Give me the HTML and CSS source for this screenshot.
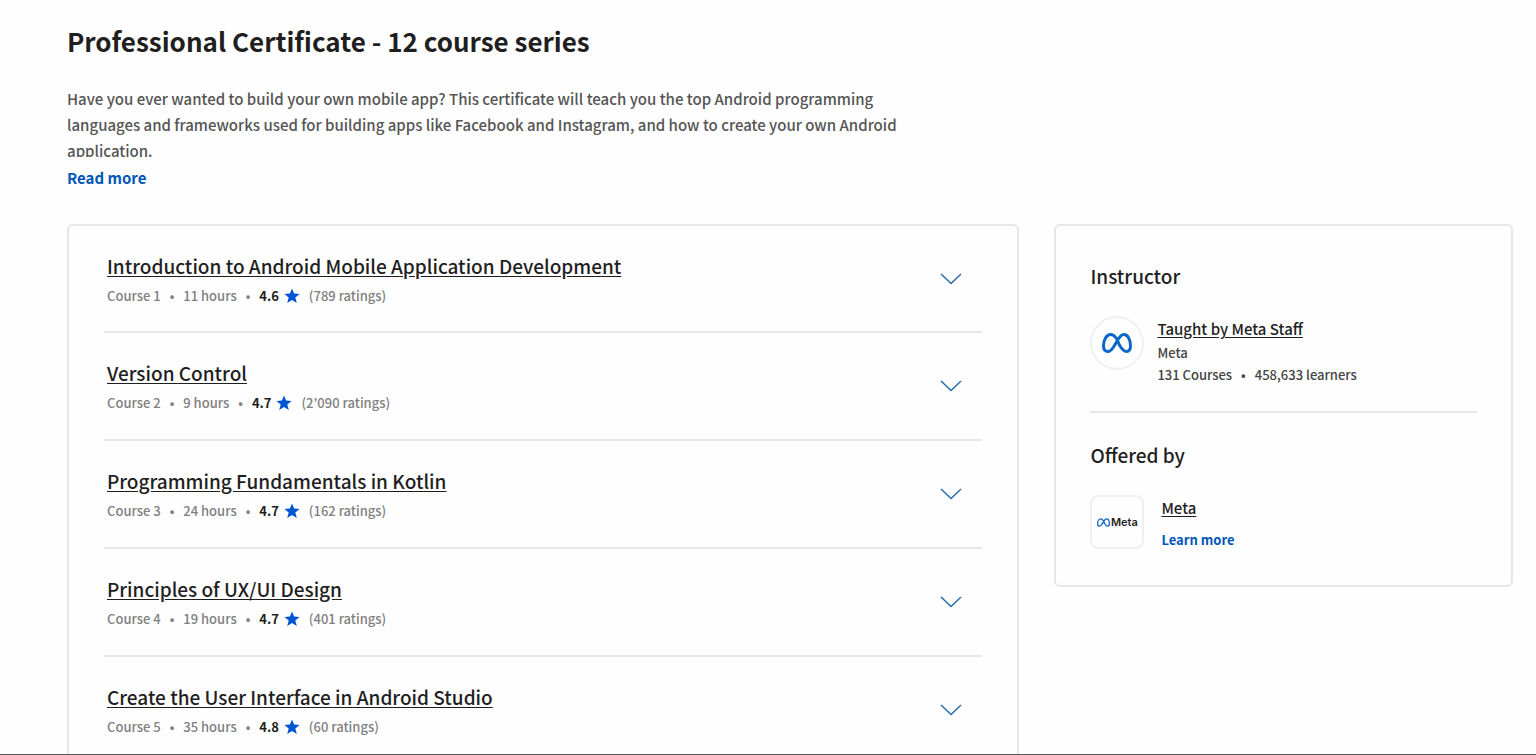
FILE: index.html
```html
<!DOCTYPE html>
<html lang="en">
<head>
    <meta charset="UTF-8">
    <meta name="viewport" content="width=device-width, initial-scale=1.0">
    <title>Professional Certificate - 12 course series</title>
    <link rel="stylesheet" href="styles.css">
</head>
<body>
    <!-- Shared icons -->
    <svg class="sprite" aria-hidden="true">
        <symbol id="star" viewBox="0 0 16 16">
            <path d="M8 0.400l2.100 5.200 5.500 0.300-4.300 3.600 1.500 5.600L8 12l-4.800 3.100 1.500-5.600L0.400 5.900l5.500-0.300z"/>
        </symbol>
        <symbol id="chevron" viewBox="0 0 22 12">
            <path d="M1 1l10 9.500L21 1"/>
        </symbol>
        <symbol id="infinity" viewBox="0 0 30 20">
            <path d="M15 6.200C12.800 3 10.900 1.500 8.600 1.500 4.500 1.500 1.500 7 1.500 12.600c0 3.600 1.600 5.900 4.300 5.900 2.600 0 4.200-1.800 7-6.600L15 8.100c2.400-4.200 4.300-6.600 7-6.600 3.900 0 6.500 5.400 6.500 11.200 0 3.600-1.500 5.800-4.100 5.800-2.600 0-4.100-1.700-7-6.500z"/>
        </symbol>
    </svg>

    <main class="page">
        <h1>Professional Certificate - 12 course series</h1>
        <p class="description">Have you ever wanted to build your own mobile app? This certificate will teach you the top Android programming languages and frameworks used for building apps like Facebook and Instagram, and how to create your own Android application.</p>
        <button type="button" class="read-more">Read more</button>

        <div class="columns">
            <section class="card courses">
                <div class="course">
                    <div>
                        <h2><a href="#">Introduction to Android Mobile Application Development</a></h2>
                        <p class="meta"><span>Course 1</span><span class="dot">•</span><span>11 hours</span><span class="dot">•</span><b>4.6</b><svg class="star"><use href="#star"/></svg><span>(789 ratings)</span></p>
                    </div>
                    <button type="button" class="toggle" aria-label="Show course 1 details"><svg><use href="#chevron"/></svg></button>
                </div>
                <div class="course">
                    <div>
                        <h2><a href="#">Version Control</a></h2>
                        <p class="meta"><span>Course 2</span><span class="dot">•</span><span>9 hours</span><span class="dot">•</span><b>4.7</b><svg class="star"><use href="#star"/></svg><span>(2’090 ratings)</span></p>
                    </div>
                    <button type="button" class="toggle" aria-label="Show course 2 details"><svg><use href="#chevron"/></svg></button>
                </div>
                <div class="course">
                    <div>
                        <h2><a href="#">Programming Fundamentals in Kotlin</a></h2>
                        <p class="meta"><span>Course 3</span><span class="dot">•</span><span>24 hours</span><span class="dot">•</span><b>4.7</b><svg class="star"><use href="#star"/></svg><span>(162 ratings)</span></p>
                    </div>
                    <button type="button" class="toggle" aria-label="Show course 3 details"><svg><use href="#chevron"/></svg></button>
                </div>
                <div class="course">
                    <div>
                        <h2><a href="#">Principles of UX/UI Design</a></h2>
                        <p class="meta"><span>Course 4</span><span class="dot">•</span><span>19 hours</span><span class="dot">•</span><b>4.7</b><svg class="star"><use href="#star"/></svg><span>(401 ratings)</span></p>
                    </div>
                    <button type="button" class="toggle" aria-label="Show course 4 details"><svg><use href="#chevron"/></svg></button>
                </div>
                <div class="course">
                    <div>
                        <h2><a href="#">Create the User Interface in Android Studio</a></h2>
                        <p class="meta"><span>Course 5</span><span class="dot">•</span><span>35 hours</span><span class="dot">•</span><b>4.8</b><svg class="star"><use href="#star"/></svg><span>(60 ratings)</span></p>
                    </div>
                    <button type="button" class="toggle" aria-label="Show course 5 details"><svg><use href="#chevron"/></svg></button>
                </div>
            </section>

            <aside class="card sidebar">
                <section class="instructor">
                    <h2>Instructor</h2>
                    <div class="person">
                        <div class="avatar"><svg class="logo"><use href="#infinity"/></svg></div>
                        <div>
                            <a class="name" href="#">Taught by Meta Staff</a>
                            <p>Meta</p>
                            <p>131 Courses<span class="dot">•</span>458,633 learners</p>
                        </div>
                    </div>
                </section>
                <section class="offered">
                    <h2>Offered by</h2>
                    <div class="partner">
                        <div class="brand"><svg class="logo"><use href="#infinity"/></svg><span>Meta</span></div>
                        <div>
                            <a class="name" href="#">Meta</a>
                            <a class="learn-more" href="#">Learn more</a>
                        </div>
                    </div>
                </section>
            </aside>
        </div>
    </main>
</body>
</html>
```
FILE: styles.css
```css
* {
    box-sizing: border-box;
}
body {
    margin: 0;
    font-family: "Noto Sans CJK KR", "Noto Sans", sans-serif;
    font-size: 14px;
    line-height: 22px;
    background: #fefefe;
    color: #1f1f1f;
}
h1, h2, p {
    margin: 0;
    font-weight: 500;
}
button {
    padding: 0;
    border: none;
    background: none;
    font-family: inherit;
    cursor: pointer;
}
.sprite {
    display: none;
}
.page {
    height: 100vh;
    padding: 23px 23px 0 67px;
    border-bottom: 1px solid #555;
    overflow: hidden;
}
h1 {
    font-size: 26px;
    font-weight: 700;
    line-height: 36px;
}
.description {
    max-width: 850px;
    height: 71px;
    margin-top: 27px;
    overflow: hidden;
    font-size: 15px;
    line-height: 26px;
    color: #555;
}
.read-more {
    display: block;
    margin-top: 10px;
    font-size: 15px;
    font-weight: 700;
    line-height: 22px;
    color: #0056b8;
}
.columns {
    display: grid;
    grid-template-columns: 27fr 13fr;
    gap: 35px;
    align-items: start;
    margin-top: 35px;
}
.card {
    padding: 0 35px;
    border: 2px solid #e6e6e6;
    border-radius: 6px;
}
.course {
    display: flex;
    justify-content: space-between;
    align-items: center;
    height: 108px;
    padding: 0 20px 0 3px;
    border-bottom: 2px solid #e6e6e6;
}
.course:first-child {
    height: 107px;
}
.course h2 {
    font-size: 19px;
    line-height: 30px;
}
a {
    color: inherit;
    text-underline-offset: 2px;
}
.meta {
    display: flex;
    align-items: center;
    margin-top: 4px;
    font-size: 13px;
    color: #808080;
}
.meta b {
    color: #1f1f1f;
}
.dot {
    margin: 0 9px;
}
.star {
    width: 16px;
    height: 16px;
    margin: 0 9px 0 5px;
    fill: #0056d2;
}
.toggle svg {
    display: block;
    width: 22px;
    height: 12px;
    fill: none;
    stroke: #2a6cab;
    stroke-width: 1.5;
}
.sidebar {
    padding: 0 34px;
}
.sidebar h2 {
    font-size: 19px;
    line-height: 28px;
}
.instructor {
    padding: 36px 0 25px;
    border-bottom: 2px solid #e6e6e6;
}
.person, .partner {
    display: flex;
    gap: 13px;
    margin-top: 26px;
}
.person p {
    font-size: 13px;
    color: #444;
}
.name {
    display: block;
    font-size: 15px;
    font-weight: 500;
    line-height: 26px;
}
.avatar, .brand {
    display: flex;
    flex: none;
    justify-content: center;
    align-items: center;
    width: 54px;
    height: 54px;
    border: 2px solid #f0f0f0;
    border-radius: 50%;
}
.logo {
    width: 30px;
    height: 20px;
    fill: none;
    stroke: #0c66c8;
    stroke-width: 3;
}
.offered {
    padding: 28px 0 34px;
}
.partner {
    gap: 17px;
}
.brand {
    gap: 1px;
    border-radius: 8px;
    font-family: Inter, sans-serif;
    font-size: 11px;
    font-weight: 600;
}
.brand .logo {
    width: 13px;
    height: 9px;
}
.learn-more {
    display: block;
    margin-top: 8px;
    font-size: 13px;
    font-weight: 700;
    color: #0056b8;
    text-decoration: none;
}
```
